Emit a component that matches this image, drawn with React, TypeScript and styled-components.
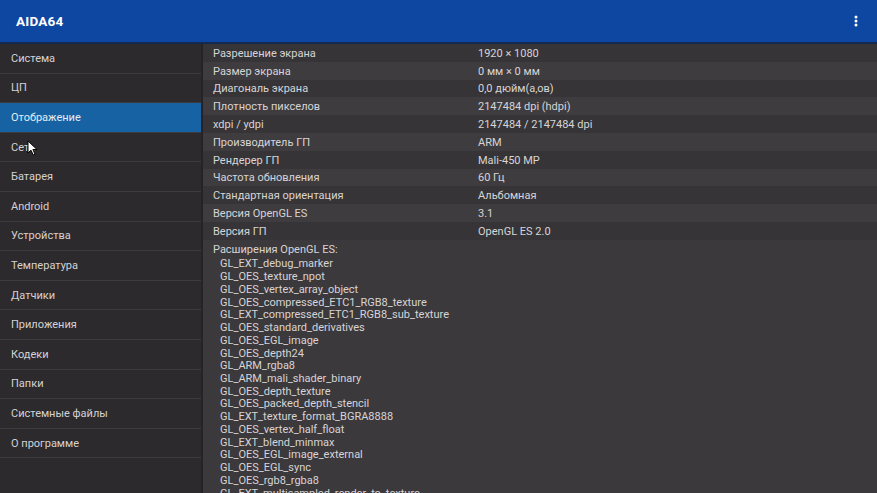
import React from 'react';
import styled, { createGlobalStyle } from 'styled-components';

const GlobalStyle = createGlobalStyle`
  html, body {
    margin: 0;
    padding: 0;
    background: #3c393c;
    font-family: Roboto, "Noto Sans", "Liberation Sans", sans-serif;
  }
  #root {
    height: 493px;
    overflow: hidden;
  }
`;

const Page = styled.div`
  display: flex;
  flex-direction: column;
  height: 493px;
  width: 877px;
  overflow: hidden;
`;

const Toolbar = styled.header`
  display: flex;
  align-items: center;
  justify-content: space-between;
  height: 42px;
  flex-shrink: 0;
  padding: 0 14px 0 16px;
  background-color: #0e47a1;
  border-bottom: 2px solid #132a4e;
`;

const Title = styled.h1`
  margin: 0;
  color: #ffffff;
  font-size: 13.5px;
  font-weight: 700;
  letter-spacing: 0.2px;
`;

const MenuButton = styled.div`
  display: flex;
  align-items: center;
  justify-content: center;
  width: 14px;
  height: 20px;
`;

const Main = styled.div`
  display: flex;
  flex: 1;
  min-height: 0;
`;

const Sidebar = styled.nav`
  width: 201px;
  flex-shrink: 0;
  background-color: #2d2a2d;
  border-right: 2px solid #262326;
`;

const NavItem = styled.div<{ $active?: boolean }>`
  position: relative;
  display: flex;
  align-items: center;
  height: 28.6px;
  padding-left: 11px;
  font-size: 11px;
  color: ${(p) => (p.$active ? '#e4ecf4' : '#d4d2d4')};
  background-color: ${(p) => (p.$active ? '#1762a3' : 'transparent')};
  border-bottom: 1px solid #3e3b3e;
`;

const Cursor = styled.svg`
  position: absolute;
  left: 27px;
  top: 7px;
`;

const Content = styled.section`
  flex: 1;
  min-width: 0;
  background-color: #3c393c;
  overflow: hidden;
`;

const InfoRow = styled.div<{ $odd: boolean }>`
  display: grid;
  grid-template-columns: 265px 1fr;
  align-items: center;
  height: 17.8px;
  padding: 1px 0 0 10px;
  box-sizing: border-box;
  font-size: 11px;
  color: #d6d4d6;
  background-color: ${(p) => (p.$odd ? '#373437' : '#3f3c3f')};
`;

const ExtTitle = styled.div`
  display: flex;
  align-items: center;
  height: 17.6px;
  padding: 2px 0 0 10px;
  box-sizing: border-box;
  font-size: 11px;
  color: #d6d4d6;
`;

const ExtList = styled.ul`
  list-style: none;
  margin: 0;
  padding: 1px 0 0 17px;
`;

const ExtItem = styled.li`
  font-size: 11px;
  line-height: 12.74px;
  color: #d6d4d6;
  white-space: nowrap;
`;

const navItems = [
  'Система',
  'ЦП',
  'Отображение',
  'Сеть',
  'Батарея',
  'Android',
  'Устройства',
  'Температура',
  'Датчики',
  'Приложения',
  'Кодеки',
  'Папки',
  'Системные файлы',
  'О программе',
];

const info: [string, string][] = [
  ['Разрешение экрана', '1920 × 1080'],
  ['Размер экрана', '0 мм × 0 мм'],
  ['Диагональ экрана', '0,0 дюйм(а,ов)'],
  ['Плотность пикселов', '2147484 dpi (hdpi)'],
  ['xdpi / ydpi', '2147484 / 2147484 dpi'],
  ['Производитель ГП', 'ARM'],
  ['Рендерер ГП', 'Mali-450 MP'],
  ['Частота обновления', '60 Гц'],
  ['Стандартная ориентация', 'Альбомная'],
  ['Версия OpenGL ES', '3.1'],
  ['Версия ГП', 'OpenGL ES 2.0'],
];

const extensions = [
  'GL_EXT_debug_marker',
  'GL_OES_texture_npot',
  'GL_OES_vertex_array_object',
  'GL_OES_compressed_ETC1_RGB8_texture',
  'GL_EXT_compressed_ETC1_RGB8_sub_texture',
  'GL_OES_standard_derivatives',
  'GL_OES_EGL_image',
  'GL_OES_depth24',
  'GL_ARM_rgba8',
  'GL_ARM_mali_shader_binary',
  'GL_OES_depth_texture',
  'GL_OES_packed_depth_stencil',
  'GL_EXT_texture_format_BGRA8888',
  'GL_OES_vertex_half_float',
  'GL_EXT_blend_minmax',
  'GL_OES_EGL_image_external',
  'GL_OES_EGL_sync',
  'GL_OES_rgb8_rgba8',
  'GL_EXT_multisampled_render_to_texture',
];

const App: React.FC = () => {
  return (
    <>
      <GlobalStyle />
      <Page>
        <Toolbar>
          <Title>AIDA64</Title>
          <MenuButton>
            <svg width="4" height="14" viewBox="0 0 4 14">
              <circle cx="2" cy="3" r="1.5" fill="#ffffff" />
              <circle cx="2" cy="7" r="1.5" fill="#ffffff" />
              <circle cx="2" cy="11" r="1.5" fill="#ffffff" />
            </svg>
          </MenuButton>
        </Toolbar>

        <Main>
          <Sidebar>
            {navItems.map((item) => (
              <NavItem key={item} $active={item === 'Отображение'}>
                {item}
                {item === 'Сеть' && (
                  <Cursor width="11" height="16" viewBox="0 0 11 16">
                    <path
                      d="M1 1 L1 13 L4 10.2 L6.2 15 L8 14.2 L5.9 9.5 L10 9.5 Z"
                      fill="#ffffff"
                      stroke="#000000"
                      strokeWidth="1"
                      strokeLinejoin="round"
                    />
                  </Cursor>
                )}
              </NavItem>
            ))}
          </Sidebar>

          <Content>
            {info.map(([label, value], i) => (
              <InfoRow key={label} $odd={i % 2 === 0}>
                <span>{label}</span>
                <span>{value}</span>
              </InfoRow>
            ))}
            <ExtTitle>Расширения OpenGL ES:</ExtTitle>
            <ExtList>
              {extensions.map((ext) => (
                <ExtItem key={ext}>{ext}</ExtItem>
              ))}
            </ExtList>
          </Content>
        </Main>
      </Page>
    </>
  );
};

export default App;
